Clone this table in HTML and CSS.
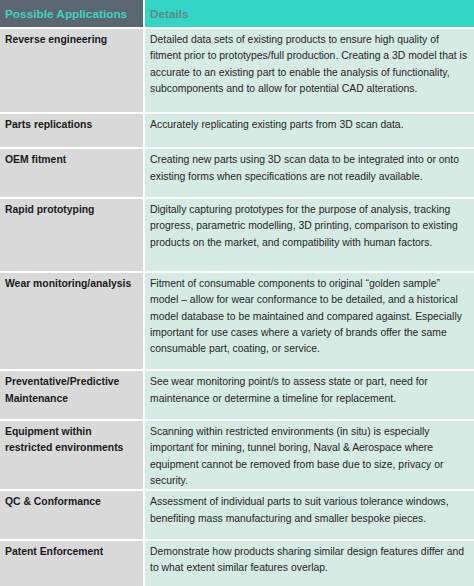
FILE: index.html
```html
<!DOCTYPE html>
<html>
<head>
<meta charset="utf-8">
<link rel="stylesheet" href="styles.css">
</head>
<body>
<div class="table">
  <div class="head head-left">Possible Applications</div>
  <div class="head head-right">Details</div>

  <div class="cell app roomy">Reverse engineering</div>
  <div class="cell det roomy">Detailed data sets of existing products to ensure high quality of fitment prior to prototypes/full production. Creating a 3D model that is accurate to an existing part to enable the analysis of functionality, subcomponents and to allow for potential CAD alterations.</div>

  <div class="cell app roomy">Parts replications</div>
  <div class="cell det roomy">Accurately replicating existing parts from 3D scan data.</div>

  <div class="cell app">OEM fitment</div>
  <div class="cell det">Creating new parts using 3D scan data to be integrated into or onto existing forms when specifications are not readily available.</div>

  <div class="cell app tall">Rapid prototyping</div>
  <div class="cell det tall">Digitally capturing prototypes for the purpose of analysis, tracking progress, parametric modelling, 3D printing, comparison to existing products on the market, and compatibility with human factors.</div>

  <div class="cell app">Wear monitoring/analysis</div>
  <div class="cell det">Fitment of consumable components to original “golden sample” model – allow for wear conformance to be detailed, and a historical model database to be maintained and compared against. Especially important for use cases where a variety of brands offer the same consumable part, coating, or service.</div>

  <div class="cell app">Preventative/Predictive Maintenance</div>
  <div class="cell det">See wear monitoring point/s to assess state or part, need for maintenance or determine a timeline for replacement.</div>

  <div class="cell app snug">Equipment within restricted environments</div>
  <div class="cell det snug">Scanning within restricted environments (in situ) is especially important for mining, tunnel boring, Naval &amp; Aerospace where equipment cannot be removed from base due to size, privacy or security.</div>

  <div class="cell app">QC &amp; Conformance</div>
  <div class="cell det">Assessment of individual parts to suit various tolerance windows, benefiting mass manufacturing and smaller bespoke pieces.</div>

  <div class="cell app">Patent Enforcement</div>
  <div class="cell det">Demonstrate how products sharing similar design features differ and to what extent similar features overlap.</div>
</div>
</body>
</html>
```

FILE: styles.css
```css
html, body {
  margin: 0;
  padding: 0;
  background: #ffffff;
}

body {
  font-family: "Liberation Sans", Arial, sans-serif;
  color: #1e1e1e;
  overflow: hidden;
}

.table {
  display: grid;
  grid-template-columns: 143px 1fr;
  column-gap: 2px;
  row-gap: 2px;
  width: 474px;
  background: #ffffff;
}

.head {
  height: 27px;
  display: flex;
  align-items: center;
  font-weight: bold;
  font-size: 11.8px;
}

.head-left {
  background: #5a6670;
  color: #3fd3c1;
  padding-left: 5px;
}

.head-right {
  background: #33d6c4;
  color: #5d8b86;
  padding-left: 5px;
}

.cell {
  font-size: 10.4px;
  line-height: 16.3px;
  padding: 3px 3px 12px 5px;
}

.app {
  background: #d9d9d9;
  font-weight: bold;
  color: #1a1a1a;
}

.det {
  background: #d5ebe4;
  color: #262626;
}

.roomy {
  padding-bottom: 14.5px;
}

.tall {
  padding-bottom: 20px;
}

.snug {
  padding-bottom: 0;
}
```
